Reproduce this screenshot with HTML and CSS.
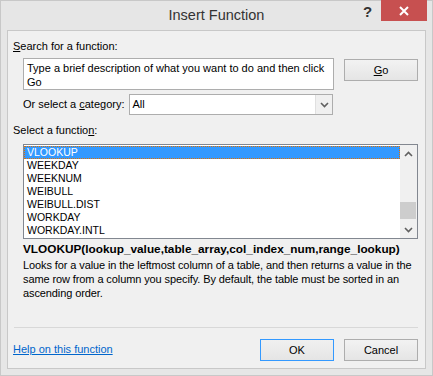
FILE: index.html
```html
<!DOCTYPE html>
<html lang="en">
<head>
  <meta charset="UTF-8">
  <title>Insert Function</title>
  <link rel="stylesheet" href="styles.css">
</head>
<body>
  <div class="window">
    <div class="titlebar">
      <span class="title">Insert Function</span>
      <span class="help">?</span>
      <span class="close">
        <svg width="12" height="10" viewBox="0 0 12 10"><path d="M2 1 L10 9 M10 1 L2 9" stroke="#fff" stroke-width="2"/></svg>
      </span>
    </div>

    <div class="client">
      <div class="label top-label"><u>S</u>earch for a function:</div>

      <div class="search-row">
        <div class="search-box">Type a brief description of what you want to do and then click<br>Go</div>
        <button class="btn go"><u>G</u>o</button>
      </div>

      <div class="category-row">
        <span class="label">Or select a <u>c</u>ategory:</span>
        <div class="select">
          <span class="select-value">All</span>
          <span class="select-arrow">
            <svg width="9" height="6" viewBox="0 0 9 6"><path d="M1 1 L4.5 4.5 L8 1" stroke="#606060" stroke-width="1.6" fill="none"/></svg>
          </span>
        </div>
      </div>

      <div class="label fn-label">Select a functio<u>n</u>:</div>

      <div class="listbox">
        <div class="rows">
          <div class="row selected">VLOOKUP</div>
          <div class="row">WEEKDAY</div>
          <div class="row">WEEKNUM</div>
          <div class="row">WEIBULL</div>
          <div class="row">WEIBULL.DIST</div>
          <div class="row">WORKDAY</div>
          <div class="row">WORKDAY.INTL</div>
        </div>
        <div class="scrollbar">
          <span class="arrow">
            <svg width="9" height="6" viewBox="0 0 9 6"><path d="M1 5 L4.5 1.5 L8 5" stroke="#606060" stroke-width="1.6" fill="none"/></svg>
          </span>
          <span class="track"><span class="thumb"></span></span>
          <span class="arrow">
            <svg width="9" height="6" viewBox="0 0 9 6"><path d="M1 1 L4.5 4.5 L8 1" stroke="#606060" stroke-width="1.6" fill="none"/></svg>
          </span>
        </div>
      </div>

      <div class="signature">VLOOKUP(lookup_value,table_array,col_index_num,range_lookup)</div>
      <div class="description">Looks for a value in the leftmost column of a table, and then returns a value in the<br>same row from a column you specify. By default, the table must be sorted in an<br>ascending order.</div>

      <div class="separator"></div>

      <div class="footer">
        <a href="#" class="help-link">Help on this function</a>
        <div class="buttons">
          <button class="btn ok">OK</button>
          <button class="btn">Cancel</button>
        </div>
      </div>
    </div>
  </div>
</body>
</html>
```

FILE: styles.css
```css
body {
  margin: 0;
  font-family: "Liberation Sans", Arial, sans-serif;
  font-size: 11px;
  color: #000;
}
.window {
  width: 433px;
  height: 376px;
  background-color: #e6e6e6;
  box-sizing: border-box;
  border: 1px solid #c8c8c8;
  position: relative;
}
.titlebar {
  height: 29px;
  display: flex;
  justify-content: center;
  align-items: center;
}
.title {
  font-size: 14.5px;
  color: #333;
  margin-top: -2px;
}
.help {
  position: absolute;
  left: 362px;
  top: 2px;
  font-size: 15px;
  font-weight: bold;
  color: #333;
}
.close {
  position: absolute;
  left: 380px;
  top: -1px;
  width: 46px;
  height: 21px;
  background-color: #c75050;
  display: flex;
  justify-content: center;
  align-items: center;
}
.client {
  margin: 0 6px;
  height: 339px;
  box-sizing: border-box;
  border: 1px solid #c8c8c8;
  background-color: #f0f0f0;
  padding: 0 7px 0 5px;
}
.label {
  line-height: 15px;
  white-space: nowrap;
}
.top-label {
  padding-top: 8px;
}
.search-row {
  display: flex;
  gap: 10px;
  margin: 4px 0 0 10px;
}
.search-box {
  width: 311px;
  height: 32px;
  box-sizing: border-box;
  border: 1px solid #adadad;
  background-color: #fff;
  padding: 2px 3px;
  line-height: 14px;
  white-space: nowrap;
  overflow: hidden;
}
.btn {
  font-family: inherit;
  font-size: 11px;
  width: 74px;
  height: 22px;
  border: 1px solid #adadad;
  background: linear-gradient(#f2f2f2, #e5e5e5);
  color: #000;
  padding: 0;
}
.go {
  margin-top: 1px;
}
.ok {
  border-color: #3399ff;
  background: linear-gradient(#f0f0f0, #e5e5e5);
}
.category-row {
  display: flex;
  align-items: center;
  gap: 4px;
  margin: 4px 0 0 10px;
}
.select {
  width: 206px;
  height: 21px;
  box-sizing: border-box;
  border: 1px solid #adadad;
  background-color: #fff;
  display: flex;
  margin-left: auto;
  margin-right: 85px;
}
.select-value {
  flex: 1;
  padding-left: 3px;
  line-height: 19px;
}
.select-arrow {
  width: 16px;
  background-color: #f0f0f0;
  border-left: 1px solid #e0e0e0;
  display: flex;
  justify-content: center;
  align-items: center;
}
.fn-label {
  margin-top: 8px;
}
.listbox {
  margin: 6px 0 0 10px;
  height: 95px;
  box-sizing: border-box;
  border: 1px solid #828790;
  background-color: #fff;
  display: flex;
}
.rows {
  flex: 1;
  padding-top: 1px;
}
.row {
  height: 13px;
  line-height: 13px;
  padding-left: 3px;
  font-size: 10.5px;
  color: #000;
}
.selected {
  background-color: #3399ff;
  color: #fff;
  outline: 1px dotted #e07000;
  outline-offset: -1px;
}
.scrollbar {
  width: 17px;
  background-color: #f0f0f0;
  display: flex;
  flex-direction: column;
}
.arrow {
  height: 17px;
  display: flex;
  justify-content: center;
  align-items: center;
}
.track {
  flex: 1;
  position: relative;
}
.thumb {
  position: absolute;
  left: 0;
  right: 1px;
  top: 40px;
  height: 17px;
  background-color: #cdcdcd;
}
.signature {
  margin: 3px 0 0 10px;
  font-size: 11.8px;
  font-weight: bold;
  line-height: 14px;
  white-space: nowrap;
}
.description {
  margin: 2px 0 0 10px;
  line-height: 14px;
  letter-spacing: -0.1px;
  white-space: nowrap;
}
.separator {
  margin: 27px 0 0 1px;
  height: 1px;
  background-color: #d8d8d8;
}
.footer {
  display: flex;
  align-items: center;
  justify-content: space-between;
  margin-top: 11px;
}
.help-link {
  color: #0066cc;
  margin-top: -2px;
}
.buttons {
  display: flex;
  gap: 10px;
}
```
